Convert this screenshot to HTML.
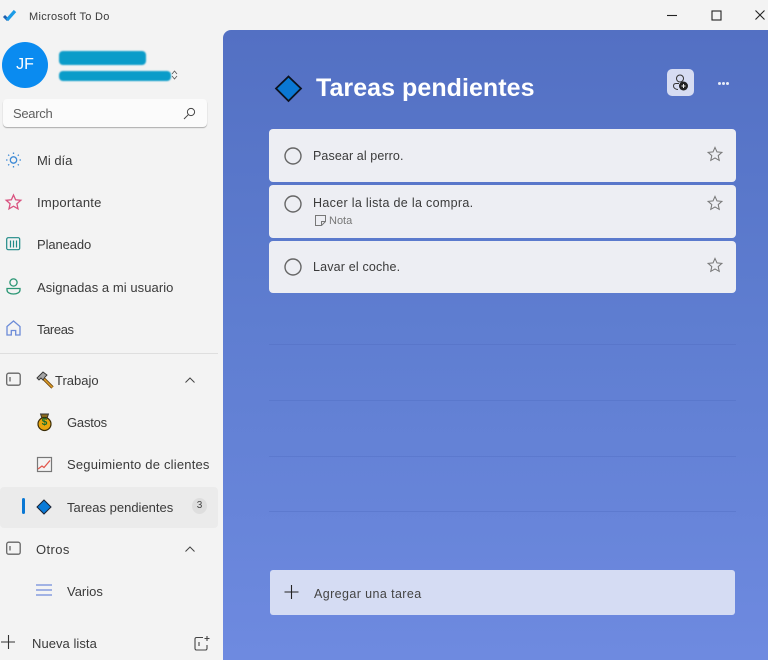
<!DOCTYPE html>
<html lang="es">
<head>
<meta charset="utf-8">
<title>Microsoft To Do</title>
<style>
html,body{margin:0;padding:0;width:768px;height:660px;overflow:hidden;background:#f3f3f3;}
#r{position:relative;width:768px;height:660px;overflow:hidden;background:#f3f3f3;font-family:"Liberation Sans",sans-serif;color:#333;filter:blur(.35px);}
#r>*{position:absolute;}
.t{white-space:nowrap;font-size:13px;line-height:18px;color:#3a3a3a;}
.c{white-space:nowrap;font-size:12.5px;line-height:18px;color:#3a3a3a;}
.card{left:269px;width:467px;height:53px;background:#edeef3;border-radius:4px;}
.line{left:269px;width:467px;height:1px;background:#4f6bc0;opacity:.4;}
svg{overflow:visible;}
</style>
</head>
<body>
<div id="r">
  <div style="left:223px;top:30px;width:545px;height:630px;background:linear-gradient(180deg,#5370c3 0%,#5e7dd0 45%,#6e8ae0 100%);border-top-left-radius:8px;"></div>

  <svg style="left:2px;top:9px" width="16" height="14" viewBox="0 0 16 14"><path d="M2 7l4 4" stroke="#1e5fb0" stroke-width="3" fill="none"/><path d="M5 11l8-9" stroke="#1c9be6" stroke-width="3.2" fill="none"/></svg>
  <div class="t" style="left:29px;top:8px;font-size:11px;letter-spacing:.3px;">Microsoft To Do</div>

  <svg style="left:667px;top:10px" width="98" height="12" viewBox="0 0 98 12" fill="none" stroke="#222" stroke-width="1.1"><path d="M0 5.500h10"/><rect x="45" y="1" width="9" height="9"/><path d="M88.500 .5l9 9M97.500 .5l-9 9"/></svg>

  <div style="left:2px;top:42px;width:46px;height:46px;border-radius:50%;background:#0a8bf0;color:#fff;font-size:16px;line-height:46px;text-align:center;">JF</div>
  <div style="left:59px;top:51px;width:87px;height:14px;border-radius:4px;background:#0a9cc9;filter:blur(.8px);"></div>
  <div style="left:59px;top:71px;width:112px;height:10px;border-radius:4px;background:#0a9cc9;filter:blur(.8px);"></div>
  <svg style="left:171px;top:70px" width="7" height="10" viewBox="0 0 7 10" fill="none" stroke="#555" stroke-width=".8"><path d="M1 4l2.500-3L6 4M1 6l2.500 3L6 6"/></svg>

  <div style="left:3px;top:99px;width:204px;height:28px;background:#fbfbfb;border-radius:4px;box-shadow:0 1px 1px #aaa;"></div>
  <div class="t" style="left:13px;top:105px;color:#5f5f5f;letter-spacing:-.3px;">Search</div>
  <svg style="left:183px;top:107px" width="13" height="13" viewBox="0 0 13 13" fill="none" stroke="#444" stroke-width="1"><circle cx="8" cy="5" r="3.600"/><path d="M5.300 7.700L1 12"/></svg>

  <svg style="left:6px;top:152px" width="16" height="16" viewBox="0 0 16 16" fill="none" stroke="#3f8bd6" stroke-width="1.300"><circle cx="7.500" cy="8" r="3.200"/><path d="M7.500 .5v1.500M7.500 14v1.500M0 8h1.500M13.500 8H15M2.200 2.700l1 1M11.800 12.300l1 1M2.200 13.300l1-1M11.800 3.700l1-1"/></svg>
  <div class="t" style="left:37px;top:152px;">Mi día</div>

  <svg style="left:5px;top:194px" width="17" height="16" viewBox="0 0 17 16" fill="none" stroke="#d9527f" stroke-width="1.300"><path d="M8.500 1l2.100 4.800 5.200.5-3.900 3.400 1.100 5.100-4.500-2.600-4.500 2.600 1.100-5.100L1.200 6.300l5.200-.5z"/></svg>
  <div class="t" style="left:37px;top:194px;letter-spacing:.25px;">Importante</div>

  <svg style="left:6px;top:237px" width="15" height="14" viewBox="0 0 15 14" fill="none" stroke="#1f8a87" stroke-width="1.200"><rect x=".7" y=".7" width="13" height="12" rx="1.500"/><path d="M4.500 3.500v7M7.500 3.500v7M10.500 3.500v7"/></svg>
  <div class="t" style="left:37px;top:236px;letter-spacing:-.1px;">Planeado</div>

  <svg style="left:6px;top:278px" width="15" height="17" viewBox="0 0 15 17" fill="none" stroke="#2a9674" stroke-width="1.300"><circle cx="7.500" cy="4.500" r="3.600"/><path d="M1 10.500h13v1.500c0 2.500-3 4-6.500 4S1 14.500 1 12z"/></svg>
  <div class="t" style="left:37px;top:279px;letter-spacing:.06px;">Asignadas a mi usuario</div>

  <svg style="left:6px;top:320px" width="15" height="16" viewBox="0 0 15 16" fill="none" stroke="#6c8bd8" stroke-width="1.300"><path d="M1 6.500L7.500 1 14 6.500V15H9.700v-4.500H5.300V15H1z"/></svg>
  <div class="t" style="left:37px;top:321px;letter-spacing:-.4px;">Tareas</div>

  <div style="left:0;top:353px;width:218px;height:1px;background:#dedede;"></div>

  <svg style="left:6px;top:372px" width="15" height="15" viewBox="0 0 15 15" fill="none" stroke="#666" stroke-width="1.300"><rect x=".7" y="1.200" width="13.500" height="12" rx="2"/><path d="M4 5v4.500"/></svg>
  <svg style="left:37px;top:372px" width="17" height="17" viewBox="0 0 17 17"><path d="M5.500 5.500L15.500 15.500" stroke="#6b430c" stroke-width="3.200"/><path d="M6 6L15.500 15.500" stroke="#e0a02a" stroke-width="1.500"/><path d="M0 6L6 0l4 3-2 2-2 3-2-2-2 2z" fill="#a5a5a5" stroke="#333" stroke-width=".9"/></svg>
  <div class="t" style="left:55px;top:372px;">Trabajo</div>
  <svg style="left:185px;top:377px" width="10" height="6" viewBox="0 0 10 6" fill="none" stroke="#444" stroke-width="1"><path d="M.5 5.500L5 1l4.500 4.500"/></svg>

  <svg style="left:37px;top:413px" width="15" height="18" viewBox="0 0 15 18"><path d="M3.500 1h8l-1.500 4.500H5z" fill="#8a6a1c" stroke="#333" stroke-width=".9"/><circle cx="7.500" cy="11" r="6.500" fill="#e8a50f" stroke="#3a2c08" stroke-width="1.200"/></svg>
  <div style="left:40px;top:417px;width:9px;text-align:center;font-size:10px;line-height:12px;font-weight:bold;color:#146c2e;">$</div>
  <div class="t" style="left:67px;top:414px;letter-spacing:-.2px;">Gastos</div>

  <svg style="left:37px;top:457px" width="15" height="15" viewBox="0 0 15 15"><rect x=".5" y=".5" width="14" height="14" fill="#f4f4f4" stroke="#777" stroke-width="1.200"/><path d="M1 12l4-3 2 1.500 6-7" fill="none" stroke="#e2574c" stroke-width="1.300"/></svg>
  <div class="t" style="left:67px;top:456px;letter-spacing:.2px;">Seguimiento de clientes</div>

  <div style="left:0;top:487px;width:218px;height:41px;background:#ebebeb;border-radius:4px;"></div>
  <div style="left:22px;top:498px;width:3px;height:16px;background:#0a78d4;border-radius:2px;"></div>
  <svg style="left:36px;top:499px" width="16" height="16" viewBox="0 0 16 16"><path d="M8 1l7 7-7 7-7-7z" fill="#0a7bd8" stroke="#1a2233" stroke-width="1"/></svg>
  <div class="t" style="left:67px;top:499px;">Tareas pendientes</div>
  <div style="left:192px;top:498px;width:15px;height:16px;border-radius:50%;background:#dedede;font-size:10px;line-height:16px;text-align:center;color:#444;">3</div>

  <svg style="left:6px;top:541px" width="15" height="15" viewBox="0 0 15 15" fill="none" stroke="#666" stroke-width="1.300"><rect x=".7" y="1.200" width="13.500" height="12" rx="2"/><path d="M4 5v4.500"/></svg>
  <div class="t" style="left:36px;top:541px;letter-spacing:.4px;">Otros</div>
  <svg style="left:185px;top:546px" width="10" height="6" viewBox="0 0 10 6" fill="none" stroke="#444" stroke-width="1"><path d="M.5 5.500L5 1l4.500 4.500"/></svg>

  <svg style="left:36px;top:584px" width="16" height="12" viewBox="0 0 16 12" fill="none" stroke="#4f72d4" stroke-width="1.100"><path d="M0 1h16M0 6h16M0 11h16"/></svg>
  <div class="t" style="left:67px;top:583px;">Varios</div>

  <svg style="left:1px;top:635px" width="15" height="15" viewBox="0 0 15 15" fill="none" stroke="#333" stroke-width="1.100"><path d="M7.500 0v14M0 7h14"/></svg>
  <div class="t" style="left:32px;top:635px;letter-spacing:.05px;">Nueva lista</div>
  <svg style="left:194px;top:636px" width="16" height="16" viewBox="0 0 16 16" fill="none" stroke="#444" stroke-width="1.100"><path d="M9 1.500H2.500A1.500 1.500 0 0 0 1 3v9.500A1.500 1.500 0 0 0 2.500 14h9a1.500 1.500 0 0 0 1.500-1.500V9"/><path d="M5 6v4M13 0v5M10.500 2.500h5"/></svg>

  <svg style="left:275px;top:75px" width="27" height="27" viewBox="0 0 27 27"><path d="M13.500 1.500L26 13.500 13.500 26 1 13.500z" fill="#0a78d4" stroke="#0c1220" stroke-width="1.800"/></svg>
  <div style="left:316px;top:72px;white-space:nowrap;color:#fff;font-size:25px;line-height:32px;font-weight:bold;letter-spacing:.05px;">Tareas pendientes</div>

  <div style="left:667px;top:69px;width:27px;height:27px;border-radius:5px;background:#d6dcf2;"></div>
  <svg style="left:672px;top:74px" width="18" height="18" viewBox="0 0 18 18" fill="none" stroke="#333" stroke-width="1"><circle cx="8" cy="4.500" r="3.500"/><path d="M7 9.500H4C2.500 9.500 1.500 10.500 1.500 12S3 15.500 6 15.500"/><circle cx="11.500" cy="12" r="4.500" fill="#222" stroke="none"/><path d="M11.500 10v4M9.500 12h4" stroke="#eee"/></svg>
  <div style="left:718px;top:82px;width:3px;height:3px;border-radius:50%;background:#e8ecf8;box-shadow:4px 0 0 #e8ecf8,8px 0 0 #e8ecf8;"></div>

  <div class="card" style="top:129px;"></div>
  <div class="card" style="top:184.500px;"></div>
  <div class="card" style="top:240.500px;height:52.500px;"></div>

  <svg style="left:284px;top:147px" width="18" height="18" viewBox="0 0 18 18" fill="none" stroke="#666" stroke-width="1.400"><circle cx="9" cy="9" r="8"/></svg>
  <svg style="left:284px;top:195px" width="18" height="18" viewBox="0 0 18 18" fill="none" stroke="#666" stroke-width="1.400"><circle cx="9" cy="9" r="8"/></svg>
  <svg style="left:284px;top:258px" width="18" height="18" viewBox="0 0 18 18" fill="none" stroke="#666" stroke-width="1.400"><circle cx="9" cy="9" r="8"/></svg>

  <div class="c" style="left:313px;top:147px;letter-spacing:.1px;">Pasear al perro.</div>
  <div class="c" style="left:313px;top:194px;letter-spacing:.32px;">Hacer la lista de la compra.</div>
  <svg style="left:315px;top:215px" width="11" height="11" viewBox="0 0 11 11" fill="none" stroke="#777" stroke-width="1"><path d="M.5.500h10v6l-4 4H.5z"/><path d="M10.500 6.500h-4v4"/></svg>
  <div class="c" style="left:329px;top:212px;font-size:11px;color:#777;">Nota</div>
  <div class="c" style="left:313px;top:258px;letter-spacing:.17px;">Lavar el coche.</div>

  <svg style="left:707px;top:146px" width="16" height="16" viewBox="0 0 17 16" fill="none" stroke="#777" stroke-width="1.100"><path d="M8.500 1l2.100 4.800 5.200.5-3.900 3.400 1.100 5.100-4.500-2.600-4.500 2.600 1.100-5.100L1.200 6.300l5.200-.5z"/></svg>
  <svg style="left:707px;top:195px" width="16" height="16" viewBox="0 0 17 16" fill="none" stroke="#777" stroke-width="1.100"><path d="M8.500 1l2.100 4.800 5.200.5-3.900 3.400 1.100 5.100-4.500-2.600-4.500 2.600 1.100-5.100L1.200 6.300l5.200-.5z"/></svg>
  <svg style="left:707px;top:257px" width="16" height="16" viewBox="0 0 17 16" fill="none" stroke="#777" stroke-width="1.100"><path d="M8.500 1l2.100 4.800 5.200.5-3.900 3.400 1.100 5.100-4.500-2.600-4.500 2.600 1.100-5.100L1.200 6.300l5.200-.5z"/></svg>

  <div class="line" style="top:344px;"></div>
  <div class="line" style="top:400px;"></div>
  <div class="line" style="top:456px;"></div>
  <div class="line" style="top:511px;"></div>

  <div style="left:270px;top:570px;width:465px;height:45px;background:#d5dcf3;border-radius:3px;"></div>
  <svg style="left:284px;top:585px" width="15" height="15" viewBox="0 0 15 15" fill="none" stroke="#222" stroke-width="1.100"><path d="M7.500 0v14M.5 7h14"/></svg>
  <div class="c" style="left:314px;top:585px;letter-spacing:.4px;color:#444;">Agregar una tarea</div>
</div>
</body>
</html>
